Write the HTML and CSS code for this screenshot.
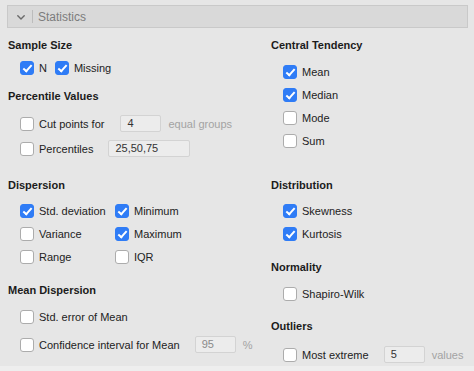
FILE: index.html
```html
<!DOCTYPE html>
<html lang="en">
<head>
    <meta charset="UTF-8">
    <title>Descriptives - Statistics</title>
    <meta name="viewport" content="width=device-width, initial-scale=1">
    <link rel="stylesheet" href="styles.css">
</head>
<body>
    <div class="panel">
        <div class="panel-header">
            <svg class="chevron" width="8" height="5" viewBox="0 0 8 5"><polyline points="0.8,0.8 4,4 7.2,0.8" fill="none" stroke="#6a6a6a" stroke-width="1.4" stroke-linecap="round" stroke-linejoin="round"/></svg>
            <span class="sep"></span>
            <span class="panel-title">Statistics</span>
        </div>

        <div class="columns">
            <!-- left column -->
            <div class="col">
                <div class="group">
                    <h3>Sample Size</h3>
                    <div class="row inline">
                        <span class="cb on"></span><span class="lbl">N</span>
                        <span class="cb on"></span><span class="lbl">Missing</span>
                    </div>
                </div>

                <div class="group g-pv">
                    <h3>Percentile Values</h3>
                    <div class="row tall">
                        <span class="cb"></span><span class="lbl">Cut points for</span>
                        <span class="field w-sm f-cut">4</span>
                        <span class="unit">equal groups</span>
                    </div>
                    <div class="row tall">
                        <span class="cb"></span><span class="lbl">Percentiles</span>
                        <span class="field w-lg">25,50,75</span>
                    </div>
                </div>

                <div class="group g-disp">
                    <h3>Dispersion</h3>
                    <div class="grid2">
                        <div class="row"><span class="cb on"></span><span class="lbl">Std. deviation</span></div>
                        <div class="row"><span class="cb on"></span><span class="lbl">Minimum</span></div>
                        <div class="row"><span class="cb"></span><span class="lbl">Variance</span></div>
                        <div class="row"><span class="cb on"></span><span class="lbl">Maximum</span></div>
                        <div class="row"><span class="cb"></span><span class="lbl">Range</span></div>
                        <div class="row"><span class="cb"></span><span class="lbl">IQR</span></div>
                    </div>
                </div>

                <div class="group">
                    <h3>Mean Dispersion</h3>
                    <div class="row"><span class="cb"></span><span class="lbl">Std. error of Mean</span></div>
                    <div class="row tall gap-top">
                        <span class="cb"></span><span class="lbl">Confidence interval for Mean</span>
                        <span class="field w-sm muted">95</span>
                        <span class="unit">%</span>
                    </div>
                </div>
            </div>

            <!-- right column -->
            <div class="col">
                <div class="group g-ct">
                    <h3>Central Tendency</h3>
                    <div class="row"><span class="cb on"></span><span class="lbl">Mean</span></div>
                    <div class="row"><span class="cb on"></span><span class="lbl">Median</span></div>
                    <div class="row"><span class="cb"></span><span class="lbl">Mode</span></div>
                    <div class="row"><span class="cb"></span><span class="lbl">Sum</span></div>
                </div>

                <div class="group g-dist">
                    <h3>Distribution</h3>
                    <div class="row"><span class="cb on"></span><span class="lbl">Skewness</span></div>
                    <div class="row"><span class="cb on"></span><span class="lbl">Kurtosis</span></div>
                </div>

                <div class="group">
                    <h3>Normality</h3>
                    <div class="row"><span class="cb"></span><span class="lbl">Shapiro-Wilk</span></div>
                </div>

                <div class="group g-out">
                    <h3>Outliers</h3>
                    <div class="row tall">
                        <span class="cb"></span><span class="lbl">Most extreme</span>
                        <span class="field w-sm">5</span>
                        <span class="unit">values</span>
                    </div>
                </div>
            </div>
        </div>
    </div>
</body>
</html>
```

FILE: styles.css
```css
html, body { margin: 0; padding: 0; }
body {
    background: #eeeeee;
    font-family: "Liberation Sans", Arial, sans-serif;
    font-size: 11px;
    color: #222;
}
.panel {
    height: 366px;
    background: #e6e6e6;
    padding-top: 5px;
    box-sizing: border-box;
    overflow: hidden;
}
.panel-header {
    margin: 0 6px 0 7px;
    height: 23px;
    box-sizing: border-box;
    border: 1px solid #c9c9c9;
    background: #d9d9d9;
    display: flex;
    align-items: center;
    padding-left: 9px;
}
.chevron { display: block; margin-top: 1px; }
.sep {
    width: 1px; height: 13px;
    background: #bcbcbc;
    margin-left: 7px;
    margin-right: 5px;
}
.panel-title { color: #7c7c7c; font-size: 12px; }

.columns {
    display: grid;
    grid-template-columns: 263px 1fr;
    padding: 10px 0 0 8px;
}
.col { display: flex; flex-direction: column; }
.group { margin-top: 15px; }
.group:first-child { margin-top: 0; }
.g-pv { margin-top: 10px; }
.g-disp { margin-top: 17px; }
.g-dist { margin-top: 26px; }
.g-out { margin-top: 14px; }

h3 {
    margin: 0 0 8px 0;
    font-size: 11px;
    line-height: 14px;
    font-weight: 700;
    color: #1b1b1b;
}
.group:first-child h3 { margin-bottom: 4px; }
.g-ct h3 { margin-bottom: 8px !important; }
.g-disp h3, .g-dist h3 { margin-bottom: 7px; }
.g-out h3 { margin-bottom: 9px; }

.row {
    height: 23px;
    display: flex;
    align-items: center;
    padding-left: 12px;
}
.row.tall { height: 25px; }
.row.gap-top { margin-top: 4px; }
.row.inline .lbl { margin-right: 8px; }

.grid2 { display: grid; grid-template-columns: 107px auto; }
.grid2 .row:nth-child(2n) { padding-left: 0; }

.cb {
    position: relative;
    width: 14px; height: 14px;
    box-sizing: border-box;
    border: 1px solid #acacac;
    border-radius: 3px;
    background: #fff;
    flex: none;
}
.cb.on { background: #2f7cf6; border-color: #2f7cf6; }
.cb.on::after {
    content: "";
    position: absolute;
    left: 4px; top: 1px;
    width: 3px; height: 7px;
    border: solid #fff;
    border-width: 0 2px 2px 0;
    transform: rotate(42deg);
}
.lbl { margin-left: 5px; color: #222; white-space: nowrap; }

.field {
    height: 17px;
    box-sizing: border-box;
    border: 1px solid #d3d3d3;
    border-radius: 2px;
    background: #ececec;
    padding: 0 6px;
    line-height: 15px;
    color: #333;
    margin-left: 15px;
}
.field.f-cut { margin-left: 16px; }
.field.muted { color: #8a8a8a; }
.w-sm { width: 41px; }
.w-lg { width: 82px; }
.unit { color: #a3a3a3; margin-left: 7px; }
```
